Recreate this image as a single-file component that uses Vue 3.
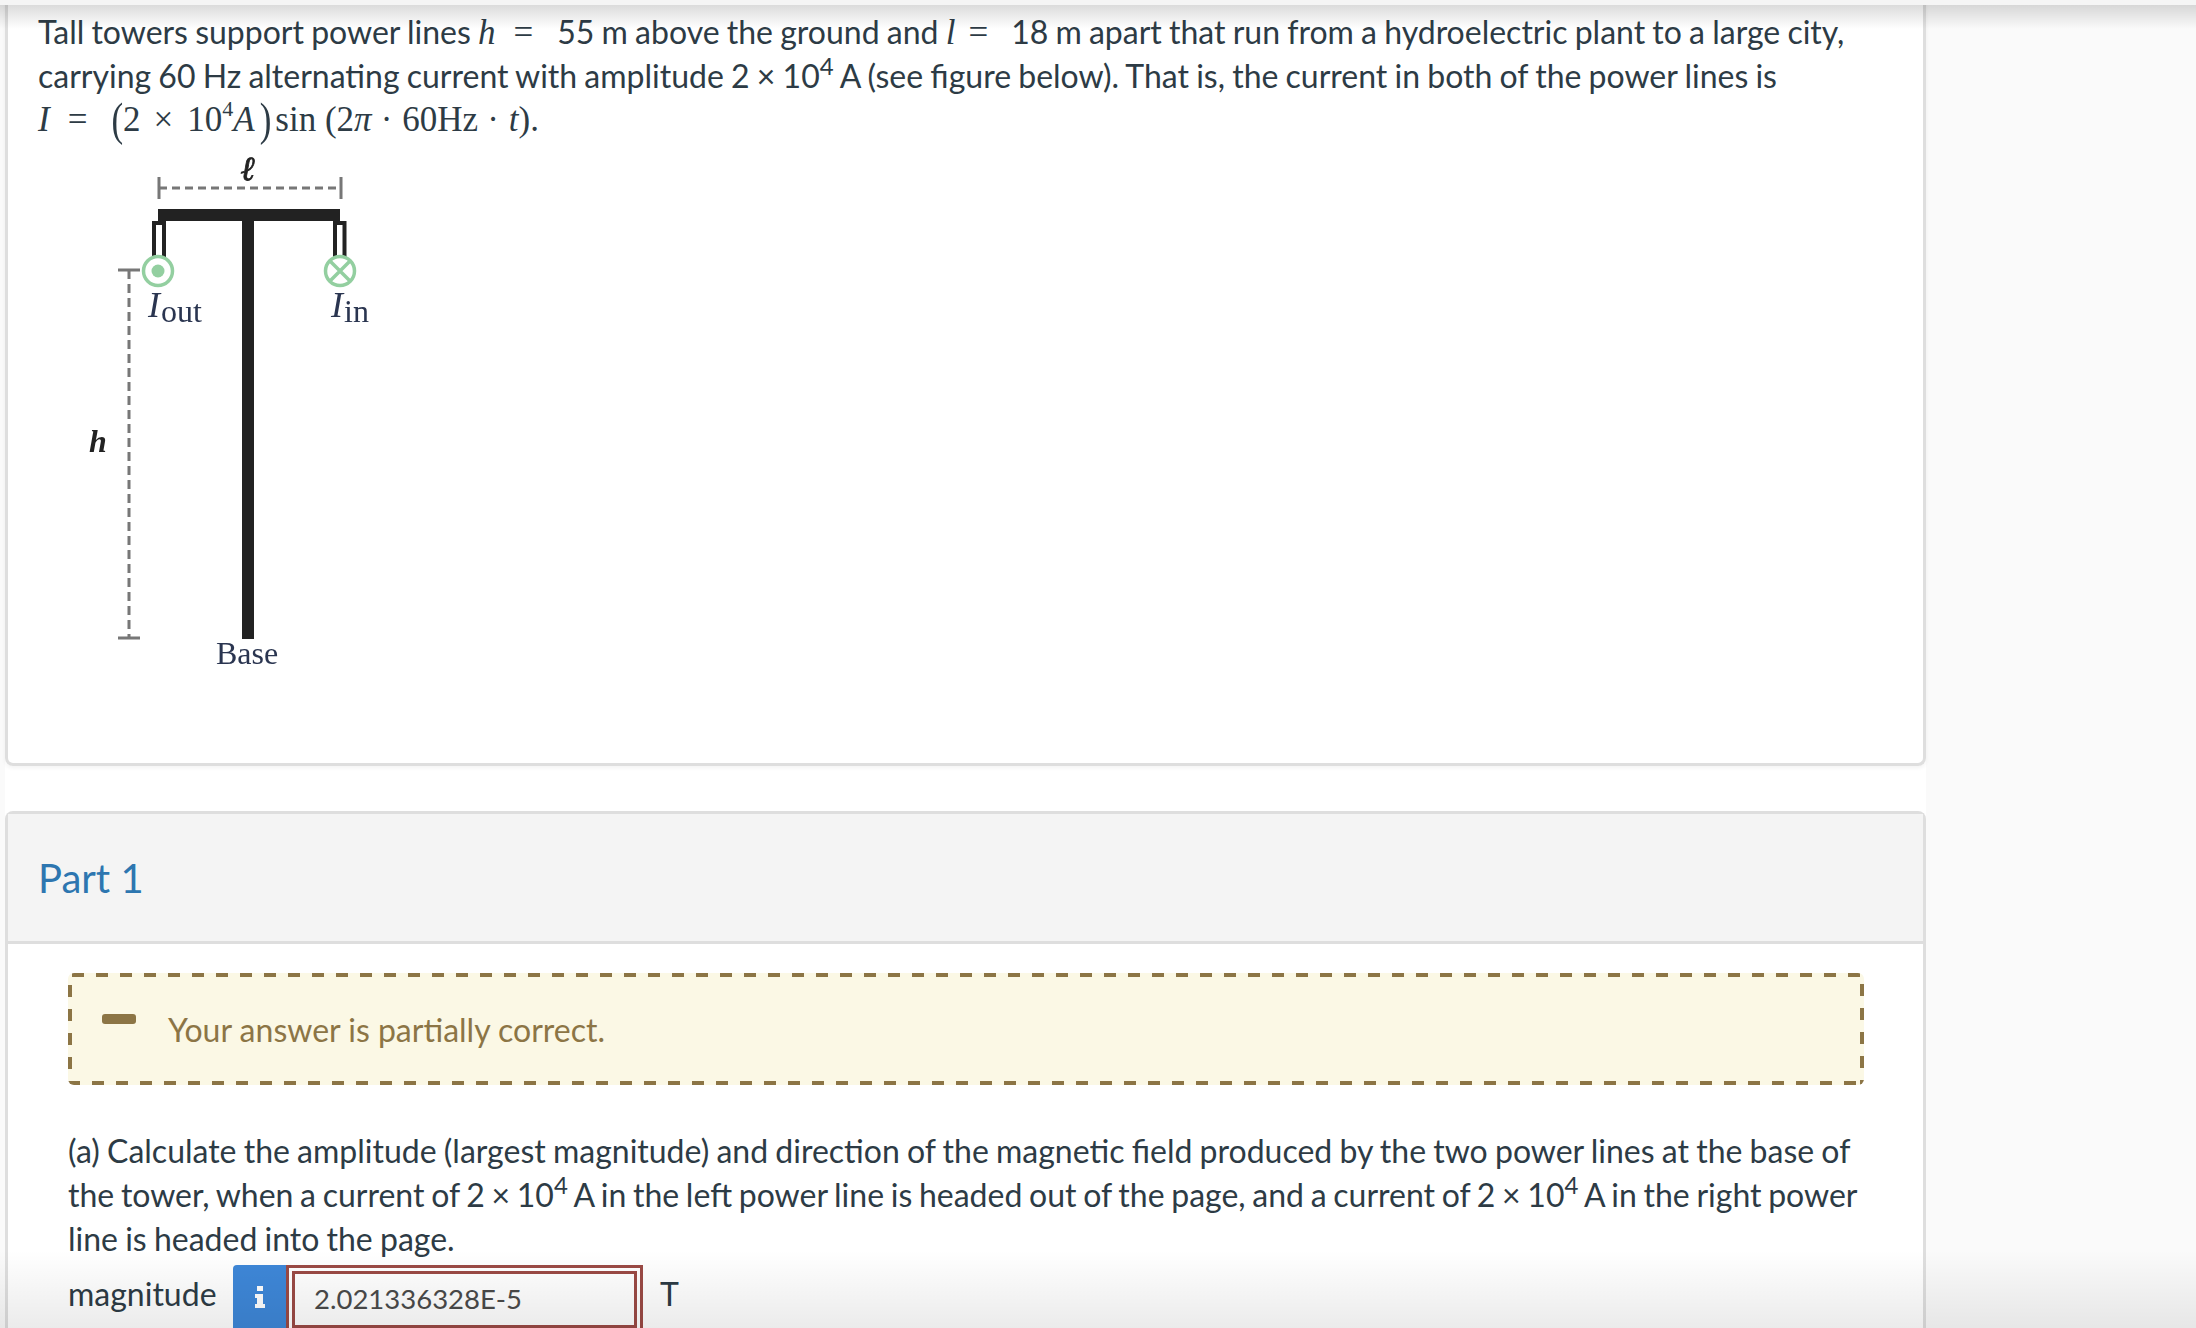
<script setup>
const hDash = "8 5";
</script>

<template>
  <div class="page">
    <div class="top-shade"></div>
    <main class="column">
      <section class="card question">
        <p class="text">
          Tall towers support power lines <span class="math"><i>h</i><span class="eq">=</span></span>55 m above the ground and <span class="math"><i>l</i><span class="eq eq-l">=</span></span>18 m apart that run from a hydroelectric plant to a large city, carrying 60 Hz alternating current with amplitude 2 × 10<sup>4</sup> A (see figure below). That is, the current in both of the power lines is
          <span class="math formula"><i>I</i><span class="eq">=</span><span class="paren">(</span>2<span class="times">×</span>10<sup class="msup">4</sup><i class="cap-a">A</i><span class="paren">)</span>sin (2<i>π</i><span class="dot">·</span>60Hz<span class="dot">·</span><i>t</i>).</span>
        </p>
        <svg class="figure" width="400" height="600" viewBox="38 142 400 600">
          <g fill="none" stroke="#777" stroke-width="3">
            <path d="M159 177V199M341 177V199M118 270H140M118 638H140" />
            <path d="M159 188H341" :stroke-dasharray="hDash" />
            <path d="M129 270V638" stroke-dasharray="9 5" />
          </g>
          <g fill="#222">
            <rect x="158" y="209" width="182" height="12" />
            <rect x="242" y="220" width="12" height="419" />
          </g>
          <path d="M154 258V223H164V258M335 258V223H344.5V258" fill="none" stroke="#222" stroke-width="4" />
          <g fill="#fff" stroke="#93cfa0" stroke-width="3.5">
            <circle cx="158" cy="271" r="14.5" />
            <circle cx="340" cy="271" r="14.5" />
          </g>
          <circle cx="158" cy="271" r="6.5" fill="#93cfa0" />
          <path d="M330 261L350 281M350 261L330 281" stroke="#93cfa0" stroke-width="3.5" />
          <g class="fig-text">
            <text x="241" y="180" class="ell">ℓ</text>
            <text x="89" y="452" class="bold-ital">h</text>
            <text x="148" y="317" class="ital">I</text>
            <text x="161" y="322">out</text>
            <text x="331" y="317" class="ital">I</text>
            <text x="344" y="322">in</text>
            <text x="216" y="664">Base</text>
          </g>
        </svg>
      </section>

      <section class="card part">
        <header class="part-head">
          <h2>Part 1</h2>
        </header>
        <div class="part-body">
          <div class="notice">
            <span class="minus"></span>
            <span>Your answer is partially correct.</span>
          </div>
          <p class="text question-a">
            (a) Calculate the amplitude (largest magnitude) and direction of the magnetic field produced by the two power lines at the base of
            <span class="tight">the tower, when a current of 2 × 10<sup>4</sup> A in the left power line is headed out of the page, and a current of 2 × 10<sup>4</sup> A in the right power</span>
            line is headed into the page.
          </p>
          <div class="answer">
            <span class="label">magnitude</span>
            <span class="info">
              <svg width="12" height="24" viewBox="0 0 12 24">
                <path d="M3 1h6v5H3zM1 9h8v10h2v4H1v-4h2v-6H1z" fill="#fff" />
              </svg>
            </span>
            <span class="field-outer">
              <span class="field">2.021336328E-5</span>
            </span>
            <span class="unit">T</span>
          </div>
        </div>
      </section>
    </main>
    <div class="bottom-shade"></div>
  </div>
</template>

<style scoped>
.page {
  position: relative;
  width: 2196px;
  height: 1328px;
  overflow: hidden;
  background: #fafafa;
  color: #2d3b45;
  font-family: Lato, "Liberation Sans", sans-serif;
  font-size: 32px;
}

.top-shade {
  position: absolute;
  left: 0;
  right: 0;
  top: 0;
  height: 5px;
  background: #f5f5f5;
}

.top-shade::after {
  content: "";
  position: absolute;
  left: 0;
  right: 0;
  top: 5px;
  height: 24px;
  background: linear-gradient(to bottom, rgba(0, 0, 0, 0.14), rgba(0, 0, 0, 0));
}

.bottom-shade {
  position: absolute;
  left: 0;
  right: 0;
  bottom: 0;
  height: 78px;
  background: linear-gradient(to bottom, rgba(0, 0, 0, 0), rgba(0, 0, 0, 0.08));
}

.column {
  width: 1921px;
  height: 1328px;
  margin-left: 5px;
  background: #fff;
}

.card {
  border: 3px solid #dedede;
}

.question {
  height: 766px;
  box-sizing: border-box;
  padding: 10px 32px 0 30px;
  border-top: none;
  border-radius: 0 0 8px 8px;
  box-shadow: 0 2px 4px rgba(0, 0, 0, 0.05);
}

.text {
  margin: 0;
  line-height: 44px;
  word-spacing: -1px;
}

.tight {
  display: block;
  white-space: nowrap;
  word-spacing: -1.5px;
}

sup {
  font-size: 24px;
  line-height: 0;
  vertical-align: 13px;
}

.math {
  font-family: "Liberation Serif", serif;
  font-size: 35px;
  line-height: 0;
}

.eq {
  margin: 0 24px 0 18px;
}

.eq-l {
  margin: 0 23px 0 13px;
}

.formula {
  display: block;
  line-height: 44px;
  height: 44px;
  white-space: nowrap;
  word-spacing: 0;
}

.paren {
  display: inline-block;
  line-height: 0;
  transform: scale(1, 1.35);
}

.times {
  margin: 0 14px 0 13px;
}

.dot {
  margin: 0 10px 0 9px;
}

.msup {
  font-size: 22px;
  vertical-align: 15px;
}

.cap-a {
  margin-right: 5px;
}

.paren + .math,
.cap-a + .paren {
  margin-right: 4px;
}

.figure {
  display: block;
  filter: blur(0.4px);
}

.fig-text {
  font-family: "Liberation Serif", serif;
  font-size: 32px;
  fill: #2a3550;
}

.ital {
  font-style: italic;
  font-size: 36px;
}

.bold-ital {
  font-style: italic;
  font-weight: 700;
  fill: #222;
}

.ell {
  font-style: italic;
  font-weight: 700;
  fill: #222;
  stroke: #222;
  stroke-width: 0.8;
  font-size: 34px;
}

.part {
  margin-top: 45px;
  border-bottom: none;
  border-radius: 8px 8px 0 0;
}

.part-head {
  height: 127px;
  display: flex;
  align-items: center;
  padding-left: 30px;
  background: #f4f4f4;
  border-bottom: 3px solid #dedede;
}

.part-head h2 {
  margin: 0;
  font-size: 40px;
  font-weight: 400;
  color: #2d76b0;
}

.part-body {
  padding: 29px 59px 0 60px;
}

.notice {
  box-sizing: border-box;
  height: 112px;
  display: flex;
  align-items: center;
  gap: 32px;
  padding-left: 34px;
  border-radius: 6px;
  color: #8c7545;
  background-color: #fbf8e5;
  background-image:
    repeating-linear-gradient(to right, #8c7545 0 12px, transparent 12px 24px),
    repeating-linear-gradient(to right, #8c7545 0 12px, transparent 12px 24px),
    repeating-linear-gradient(to bottom, #8c7545 0 12px, transparent 12px 24px),
    repeating-linear-gradient(to bottom, #8c7545 0 12px, transparent 12px 24px);
  background-size: 100% 4px, 100% 4px, 4px 100%, 4px 100%;
  background-position: 4px 0, 0 100%, 0 12px, 100% 11px;
  background-repeat: no-repeat;
}

.minus {
  width: 34px;
  height: 10px;
  margin-top: -20px;
  border-radius: 3px;
  background: #8c7545;
}

.question-a {
  margin-top: 44px;
}

.answer {
  display: flex;
  align-items: center;
  height: 63px;
  margin-top: 4px;
}

.label {
  width: 165px;
  margin-top: -6px;
}

.info {
  width: 53px;
  height: 63px;
  display: flex;
  align-items: center;
  justify-content: center;
  background: #3e87d8;
  border-radius: 4px 0 0 0;
}

.field-outer {
  box-sizing: border-box;
  width: 357px;
  height: 63px;
  padding: 3px;
  border: 3px solid #9b4a45;
  border-bottom: none;
  margin-right: 17px;
}

.field {
  display: flex;
  align-items: center;
  box-sizing: border-box;
  height: 57px;
  padding-left: 19px;
  padding-bottom: 2px;
  border: 3px solid #9b4a45;
  font-size: 27.5px;
  color: #4a4a4a;
}

.unit {
  margin-top: -6px;
}
</style>

<style>
html,
body {
  margin: 0;
}
</style>
